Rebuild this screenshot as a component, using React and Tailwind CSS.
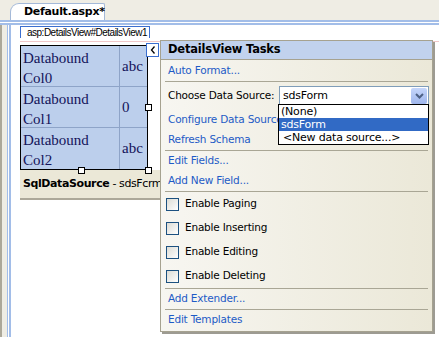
import React from 'react';

const font = { fontFamily: '"DejaVu Sans", Verdana, sans-serif' };

const Link = ({ children }) => (
  <div className="h-[20px] flex items-center pl-[7px] text-[#1e5bc6] whitespace-nowrap">{children}</div>
);

const Sep = () => <div className="mx-[4px] h-px bg-[#a9a695]" />;

const Check = ({ label }) => (
  <div className="h-[24px] flex items-center pl-[5px] gap-[6px] text-black">
    <div className="w-[13px] h-[13px] border border-[#1c5180] bg-gradient-to-br from-[#dcdcd5] to-white" />
    <span>{label}</span>
  </div>
);

const Handle = ({ className }) => (
  <div className={`absolute w-[7px] h-[7px] bg-white border border-black ${className}`} />
);

const Row = ({ a, b }) => (
  <div className="flex h-[41px] border-b border-[#8ea4c8] last:border-b-0">
    <div className="w-[99px] border-r border-[#8ea4c8] px-[2px] pt-[2px] leading-[20px]">
      Databound<br />{a}
    </div>
    <div className="flex-1 flex items-center px-[2px]">{b}</div>
  </div>
);

export default function App() {
  return (
    <div className="relative w-[439px] h-[337px] overflow-hidden bg-white text-[10.5px] tracking-[-0.2px]" style={font}>
      {/* tab strip */}
      <div className="h-[20px] bg-[#efede4] flex items-end pl-[10px]">
        <div className="h-[17px] w-[95px] bg-white border border-b-0 border-[#a4b9d8] rounded-tl-[9px] rounded-tr-[2px] flex items-center pl-[13px] font-bold text-[11px] tracking-[-0.3px] text-black">
          Default.aspx*
        </div>
      </div>
      <div className="h-[2px] bg-[#a2bde8]" />
      <div className="h-[1px] bg-white" />
      <div className="h-[2px] bg-[#a2bde8]" />

      <div className="flex h-[312px]">
        <div className="flex w-[11px] bg-[#efede4]">
          <div className="w-[2px] bg-[#aca899]" />
          <div className="w-[5px]" />
          <div className="w-[1px] bg-[#a2bde8]" />
          <div className="w-[1px] bg-white" />
          <div className="w-[2px] bg-[#a2bde8]" />
        </div>

        <div className="flex-1 bg-white pl-[9px]">
          <div
            className="inline-block h-[12px] border border-b-0 border-[#3b6fd0] pl-[6px] pr-[2px] text-[10px] leading-[11px] tracking-[-0.5px] text-black whitespace-nowrap"
            style={{ fontFamily: '"Liberation Sans", Arial, sans-serif' }}
          >
            asp:DetailsView#DetailsView1
          </div>
          <div className="h-px w-[420px] bg-[#f0c8c8]" />
          <div className="relative w-[128px] mt-[3px]">
            <div
              className="border border-black bg-[#bccfec] text-[#14145a] text-[15px] tracking-normal"
              style={{ fontFamily: '"Liberation Serif", serif' }}
            >
              <Row a="Col0" b="abc" />
              <Row a="Col1" b="0" />
              <Row a="Col2" b="abc" />
            </div>
            <Handle className="right-[-4px] top-[59px]" />
            <Handle className="left-[58px] bottom-[-4px]" />
            <Handle className="right-[-4px] bottom-[-4px]" />
            <div className="absolute left-[126px] top-[-2px] w-[13px] h-[14px] border border-[#3b6fd0] bg-white flex items-center justify-center">
              <svg width="6" height="8" viewBox="0 0 6 8">
                <path d="M4.5 0.5 L1.5 4 L4.5 7.5" fill="none" stroke="#000" strokeWidth="1.3" />
              </svg>
            </div>
          </div>
          <div className="w-[200px] h-[30px] bg-[#ebe8d7] border-b-2 border-[#aca899] flex items-center pl-[3px] text-[11px] tracking-[-0.4px] text-black whitespace-nowrap">
            <span className="font-bold">SqlDataSource</span>
            <span>&nbsp;- sdsFcrm</span>
          </div>
        </div>
      </div>

      {/* smart tag panel */}
      <div className="absolute left-[160px] top-[40px] w-[273px] border border-[#a6a290] shadow-[2px_2px_0_#9d9b92] bg-gradient-to-r from-[#f7f6f1] to-[#ebe8d8]">
        <div className="h-[19px] bg-[#c1d2ee] border-b border-[#a6a290] flex items-center pl-[7px] font-bold text-[11.5px] tracking-[-0.2px] text-black">
          DetailsView Tasks
        </div>
        <div className="pt-[1px]">
          <Link>Auto Format...</Link>
          <Sep />
          <div className="h-[28px] flex items-center pl-[7px] text-black whitespace-nowrap">
            <span className="w-[111px] shrink-0">Choose Data Source:</span>
            <div className="w-[150px] h-[20px] bg-white border border-[#7f9db9] flex items-center pl-[3px] text-[11px]">
              <span className="flex-1">sdsForm</span>
              <div className="w-[16px] h-[16px] mr-[1px] rounded-[2px] bg-gradient-to-b from-[#c5d6fb] to-[#9fb6ec] flex items-center justify-center">
                <svg width="9" height="6" viewBox="0 0 9 6">
                  <path d="M1 1 L4.5 4.5 L8 1" fill="none" stroke="#4d6185" strokeWidth="2" />
                </svg>
              </div>
            </div>
          </div>
          <Link>Configure Data Source...</Link>
          <Link>Refresh Schema</Link>
          <Sep />
          <Link>Edit Fields...</Link>
          <Link>Add New Field...</Link>
          <Sep />
          <Check label="Enable Paging" />
          <Check label="Enable Inserting" />
          <Check label="Enable Editing" />
          <Check label="Enable Deleting" />
          <Sep />
          <Link>Add Extender...</Link>
          <Sep />
          <Link>Edit Templates</Link>
          <div className="h-[1px]" />
        </div>

        {/* open dropdown list */}
        <div className="absolute left-[117px] top-[63px] w-[151px] border border-black bg-white text-[11px] text-black">
          <div className="h-[13px] leading-[13px] pl-[2px]">(None)</div>
          <div className="h-[13px] leading-[13px] pl-[2px] bg-[#316ac5] text-white">sdsForm</div>
          <div className="h-[13px] leading-[13px] pl-[4px]">&lt;New data source...&gt;</div>
        </div>
      </div>
    </div>
  );
}
